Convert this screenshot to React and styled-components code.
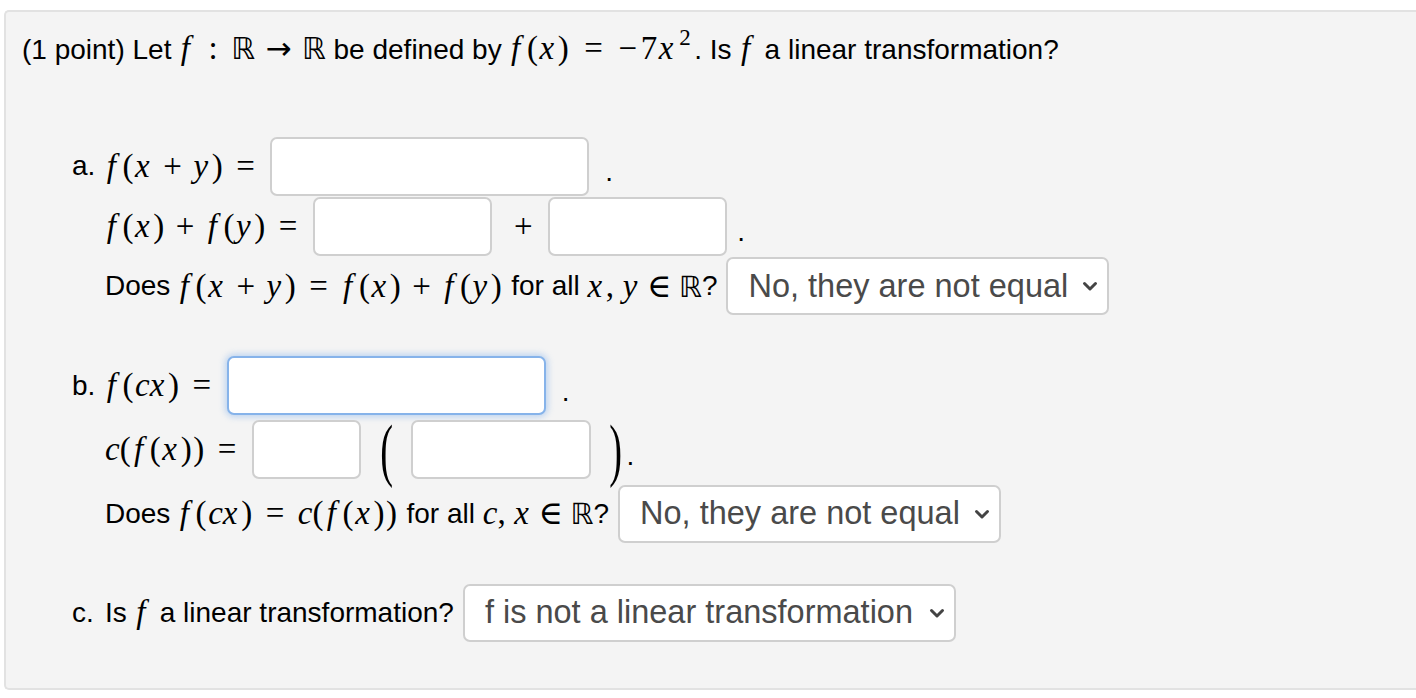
import { createGlobalStyle, styled } from 'styled-components';

const Global = createGlobalStyle`
  html, body {
    margin: 0;
    padding: 0;
    background: #fff;
  }
  body {
    font-family: "Liberation Sans", Arial, sans-serif;
    color: #000;
  }
`;

const Page = styled.div`
  padding: 10px 0 0 4px;
`;

const Panel = styled.div`
  background: #f4f4f4;
  border: 2px solid #e2e2e2;
  border-right: none;
  border-radius: 5px 0 0 5px;
  padding: 18px 0 0 16px;
  font-size: 28px;
  height: 680px;
  box-sizing: border-box;
`;

const Title = styled.p`
  margin: 0 0 66px;
  line-height: 40px;
  height: 40px;
  white-space: nowrap;
`;

const Row = styled.div`
  display: flex;
  align-items: center;
  height: 60px;
  margin-left: ${({ $indent }) => ($indent ? '33px' : '0')};
  white-space: pre;
`;

const Section = styled.div`
  margin: 0 0 ${({ $after }) => $after || 0}px 50px;
  ${Row} {
    height: ${({ $pitch }) => $pitch || 60}px;
  }
`;

const Label = styled.span`
  display: inline-block;
  width: 33px;
`;

// math is set in Times with TeX-like spacing
const M = styled.span`
  font-family: "Liberation Serif", "DejaVu Serif", serif;
  font-size: 33px;
  line-height: 1;
  letter-spacing: 0.05em;
`;

const V = styled.i`
  font-style: italic;
  padding-right: ${({ $tight }) => ($tight ? '0' : '0.06em')};
  letter-spacing: ${({ $tight }) => ($tight ? '0' : 'inherit')};
`;

const Fn = styled.i`
  font-style: italic;
  padding: 0 0.15em 0 0.05em;
`;

const Op = styled.span`
  padding: 0 ${({ $w }) => $w ?? 0.3}em;
`;

const Arrow = styled.span`
  font-family: "DejaVu Sans", sans-serif;
  font-size: 31px;
  padding: 0 0.34em;
  letter-spacing: 0;
`;

const Sup = styled.span`
  font-size: 23px;
  position: relative;
  top: -0.6em;
  line-height: 0;
  margin-left: 2px;
  padding-right: 2px;
`;

const DS = styled.span`
  font-family: "DejaVu Sans", sans-serif;
  font-size: ${({ $big }) => ($big ? 30 : 29)}px;
  letter-spacing: 0;
`;

const Field = styled.input`
  box-sizing: border-box;
  width: ${({ $w }) => $w}px;
  height: 59px;
  margin: 0 ${({ $mr }) => ($mr ?? 16)}px 0 ${({ $ml }) => ($ml ?? 2)}px;
  background: #fff;
  border: 2px solid ${({ $focus }) => ($focus ? '#86b3ea' : '#cfcfcf')};
  border-radius: 7px;
  box-shadow: ${({ $focus }) => ($focus ? '0 0 6px 2px rgba(120,170,235,0.45)' : 'none')};
  outline: none;
  font-size: 26px;
`;

const Dot = styled.span`
  font-size: 28px;
  position: relative;
  top: 6px;
`;

const Paren = styled.span`
  display: inline-block;
  font-family: "Liberation Serif", serif;
  font-size: 64px;
  line-height: 1;
  transform: scale(0.6, 1.1);
`;

const Gap = styled.span`
  padding-left: ${({ $w }) => $w}px;
`;

const Select = styled.div`
  box-sizing: border-box;
  display: inline-flex;
  align-items: center;
  justify-content: space-between;
  width: ${({ $w }) => $w}px;
  height: 58px;
  margin-left: ${({ $ml }) => ($ml ?? 9)}px;
  padding: 0 9px 0 20px;
  background: #fff;
  border: 2px solid #cfcfcf;
  border-radius: 7px;
  color: #4a4a4a;
  font-size: 32.5px;
`;

const Chevron = () => (
  <svg width="16" height="12" viewBox="0 0 16 12">
    <path d="M2.5 3.5 L8 9 L13.5 3.5" fill="none" stroke="#444" strokeWidth="3" strokeLinecap="round" strokeLinejoin="round" />
  </svg>
);

const Dropdown = ({ w, ml, children }) => (
  <Select $w={w} $ml={ml}>
    <span>{children}</span>
    <Chevron />
  </Select>
);

const R = ({ big }) => <DS $big={big}>ℝ</DS>;
const F = () => <Fn>f</Fn>;

export default function App() {
  return (
    <Page>
      <Global />
      <Panel>
        <Title>
          (1 point) Let <M><F /><Op $w={0.36}>:</Op><R big /><Arrow>→</Arrow><R big /></M> be defined by{' '}
          <M><F />(<V>x</V>)<Op $w={0.42}>=</Op>−<Gap $w={2} />7<V>x</V><Sup>2</Sup></M>. Is{' '}
          <M><F /></M> a linear transformation?
        </Title>

        <Section $after={37.5}>
          <Row>
            <Label>a.</Label>
            <M><F />(<V>x</V><Op>+</Op><V>y</V>)<Op $w={0.36}>=</Op></M>
            <Field $w={319} />
            <Dot>.</Dot>
          </Row>
          <Row $indent>
            <M><F />(<V>x</V>)<Op>+</Op><F />(<V>y</V>)<Op $w={0.36}>=</Op></M>
            <Field $w={179} $mr={22} />
            <M>+</M>
            <Field $w={179} $ml={14} $mr={10} />
            <Dot>.</Dot>
          </Row>
          <Row $indent>
            Does <M><F />(<V>x</V><Op>+</Op><V>y</V>)<Op $w={0.36}>=</Op><F />(<V>x</V>)<Op>+</Op><F />(<V>y</V>)</M> for all{' '}
            <M><V>x</V>,<Gap $w={7} /><V>y</V><Op $w={0.18}>∈</Op><R /></M>?
            <Dropdown w={383}>No, they are not equal</Dropdown>
          </Row>
        </Section>

        <Section $pitch={64} $after={37}>
          <Row>
            <Label>b.</Label>
            <M><F />(<V $tight>c</V><V>x</V>)<Op $w={0.36}>=</Op></M>
            <Field $w={319} $focus />
            <Dot>.</Dot>
          </Row>
          <Row $indent>
            <M><V $tight>c</V>(<F />(<V>x</V>))<Op $w={0.36}>=</Op></M>
            <Field $w={109} $mr={15} />
            <Paren>(</Paren>
            <Field $w={180} $ml={14} $mr={14} />
            <Paren>)</Paren>
            <Dot>.</Dot>
          </Row>
          <Row $indent>
            Does <M><F />(<V $tight>c</V><V>x</V>)<Op $w={0.36}>=</Op><V $tight>c</V>(<F />(<V>x</V>))</M> for all{' '}
            <M><V $tight>c</V>,<Gap $w={7} /><V>x</V><Op $w={0.18}>∈</Op><R /></M>?
            <Dropdown w={383}>No, they are not equal</Dropdown>
          </Row>
        </Section>

        <Section>
          <Row>
            <Label>c.</Label>
            Is <M><F /></M> a linear transformation?
            <Dropdown w={493}>f is not a linear transformation</Dropdown>
          </Row>
        </Section>
      </Panel>
    </Page>
  );
}
